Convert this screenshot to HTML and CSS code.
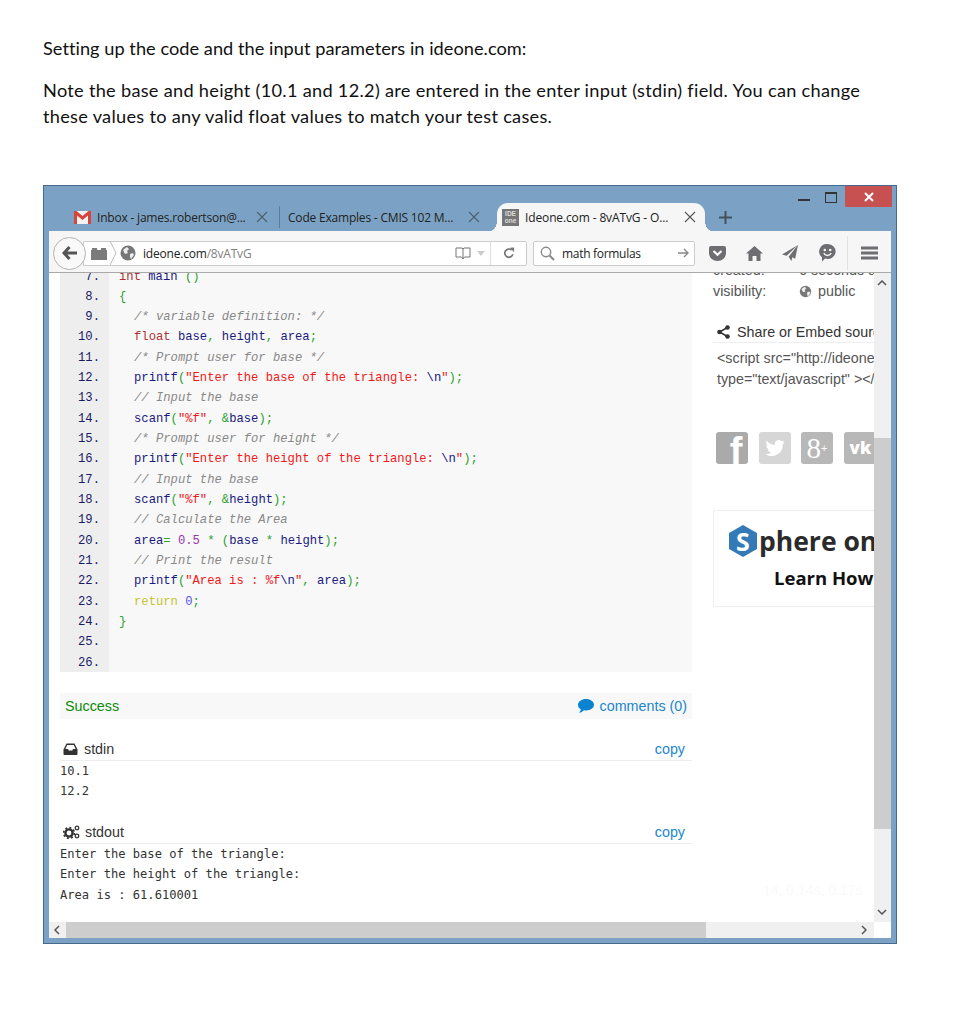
FILE: index.html
```html
<!DOCTYPE html>
<html lang="en">
<head>
<meta charset="utf-8">
<title>Setting up the code</title>
<link rel="stylesheet" href="styles.css">
</head>
<body>
<p class="doc first">Setting up the code and the input parameters in ideone.com:</p>
<p class="doc second">Note the base and height (10.1 and 12.2) are entered in the enter input (stdin) field. You can change<br>these values to any valid float values to match your test cases.</p>

<div class="window">
  <div class="titlebar">
    <div class="tabs">
      <div class="tab tab-one">
        <svg class="fav" viewBox="0 0 17 13"><rect width="17" height="13" fill="#f4f4f4"/><path d="M0 0h2.500l6 5 6-5H17v13h-3V4.500L8.500 9 3 4.500V13H0z" fill="#d6443a"/></svg>
        <span class="tab-title">Inbox - james.robertson@...</span>
        <svg class="tab-x" viewBox="0 0 12 12"><path d="M1 1l10 10M11 1L1 11" stroke="#4c5f70" stroke-width="1.100" fill="none"/></svg>
      </div>
      <div class="tab tab-two">
        <span class="tab-title">Code Examples - CMIS 102 M...</span>
        <svg class="tab-x" viewBox="0 0 12 12"><path d="M1 1l10 10M11 1L1 11" stroke="#4c5f70" stroke-width="1.100" fill="none"/></svg>
      </div>
      <div class="tab tab-active">
        <span class="favbox"><span>IDE</span><span>one</span></span>
        <span class="tab-title">Ideone.com - 8vATvG - O...</span>
        <svg class="tab-x" viewBox="0 0 12 12"><path d="M1 1l10 10M11 1L1 11" stroke="#555" stroke-width="1.100" fill="none"/></svg>
      </div>
      <svg class="plus" viewBox="0 0 13 13"><path d="M6.500 0v13M0 6.500h13" stroke="#45525e" stroke-width="2" fill="none"/></svg>
    </div>
    <div class="controls">
      <span class="ctl-min"></span>
      <span class="ctl-max"></span>
      <span class="ctl-close"><svg viewBox="0 0 10 10"><path d="M1 1l8 8M9 1L1 9" stroke="#fff" stroke-width="2" fill="none"/></svg></span>
    </div>
  </div>

  <div class="toolbar">
    <div class="back"><svg viewBox="0 0 16 14"><path d="M7.500 1L2 7l5.500 6M2.500 7H15" stroke="#555" stroke-width="3" fill="none"/></svg></div>
    <div class="urlbar">
      <svg class="puzzle" viewBox="0 0 16 13"><path d="M0 3h1V1h5v2h4V1h5v2h1v10H0z" fill="#7b7b7b"/></svg>
      <svg class="chev" viewBox="0 0 7 24"><path d="M0 0l6 12-6 12" stroke="#bbb" fill="none"/></svg>
      <svg class="globe" viewBox="0 0 16 16"><circle cx="8" cy="8" r="7.500" fill="#777"/><path d="M3 5l4-3 2 2-2 2 1 2-3 1zM10 9l3-1 1 2-3 4-1-2z" fill="#eee"/></svg>
      <span class="url"><b>ideone.com</b>/8vATvG</span>
      <svg class="book" viewBox="0 0 16 13"><path d="M1 1h6l1 1 1-1h6v9H9.500L8 12l-1.500-2H1zM8 2v9" stroke="#777" fill="#fff"/></svg>
      <svg class="drop" viewBox="0 0 8 5"><path d="M0 0h8L4 5z" fill="#ccc"/></svg>
      <span class="urldiv"></span>
      <svg class="reload" viewBox="0 0 14 14"><path d="M11.500 8.500A4.800 4.800 0 1 1 10 3.500" stroke="#777" stroke-width="2" fill="none"/><path d="M8 1l5-.5V6z" fill="#777"/></svg>
    </div>
    <div class="search">
      <svg class="mag" viewBox="0 0 15 15"><circle cx="6" cy="6" r="4.700" stroke="#888" stroke-width="1.400" fill="none"/><path d="M9.500 9.500L14 14" stroke="#888" stroke-width="2"/></svg>
      <span class="query">math formulas</span>
      <svg class="go" viewBox="0 0 11 10"><path d="M6 1l4 4-4 4M10 5H0" stroke="#888" stroke-width="1.400" fill="none"/></svg>
    </div>
    <div class="tools">
      <svg class="t-pocket" viewBox="0 0 17 15"><path d="M2 0h13a2 2 0 0 1 2 2v5a8.500 8 0 0 1-17 0V2a2 2 0 0 1 2-2z" fill="#6d6d72"/><path d="M4.500 5l4 3.700 4-3.700" stroke="#fff" stroke-width="2.200" fill="none"/></svg>
      <svg class="t-home" viewBox="0 0 17 15"><path d="M8.500 0L0 7.500h2.500V15h4v-5h4v5h4V7.500H17z" fill="#6d6d72"/></svg>
      <svg class="t-plane" viewBox="0 0 17 17"><path d="M17 0L0 10l5 1.500L17 0 7 12.500 10 17l1-4 3 1.500z" fill="#6d6d72"/></svg>
      <svg class="t-smile" viewBox="0 0 17 18"><path d="M8.500 0a8 7.500 0 1 1-2.500 14.600L3 17.500v-4.300A8 7.500 0 0 1 8.500 0z" fill="#6d6d72"/><circle cx="5.800" cy="6" r="1.300" fill="#f6f6f6"/><circle cx="11.200" cy="6" r="1.300" fill="#f6f6f6"/><path d="M4.800 9a4 4 0 0 0 7.400 0" stroke="#f6f6f6" stroke-width="1.300" fill="none"/></svg>
      <span class="t-sep"></span>
      <svg class="t-menu" viewBox="0 0 17 14"><path d="M0 2h17M0 7h17M0 12h17" stroke="#6d6d72" stroke-width="3"/></svg>
    </div>
  </div>

  <div class="page">
    <div class="pane">
      <div class="main">
        <div class="code">
          <ol class="gutter">
            <li>7.</li><li>8.</li><li>9.</li><li>10.</li><li>11.</li><li>12.</li><li>13.</li><li>14.</li><li>15.</li><li>16.</li><li>17.</li><li>18.</li><li>19.</li><li>20.</li><li>21.</li><li>22.</li><li>23.</li><li>24.</li><li>25.</li><li>26.</li>
          </ol>
          <div class="src">
<div class="ln"><span class="ty">int</span> <span class="id">main</span> <span class="pu">()</span></div>
<div class="ln"><span class="pu">{</span></div>
<div class="ln in"><span class="cm">/* variable definition: */</span></div>
<div class="ln in"><span class="ty">float</span> <span class="id">base</span><span class="pu">,</span> <span class="id">height</span><span class="pu">,</span> <span class="id">area</span><span class="pu">;</span></div>
<div class="ln in"><span class="cm">/* Prompt user for base */</span></div>
<div class="ln in"><span class="id">printf</span><span class="pu">(</span><span class="st">"Enter the base of the triangle: </span><span class="es">\n</span><span class="st">"</span><span class="pu">);</span></div>
<div class="ln in"><span class="cm">// Input the base</span></div>
<div class="ln in"><span class="id">scanf</span><span class="pu">(</span><span class="st">"%f"</span><span class="pu">,</span> <span class="pu">&amp;</span><span class="id">base</span><span class="pu">);</span></div>
<div class="ln in"><span class="cm">/* Prompt user for height */</span></div>
<div class="ln in"><span class="id">printf</span><span class="pu">(</span><span class="st">"Enter the height of the triangle: </span><span class="es">\n</span><span class="st">"</span><span class="pu">);</span></div>
<div class="ln in"><span class="cm">// Input the base</span></div>
<div class="ln in"><span class="id">scanf</span><span class="pu">(</span><span class="st">"%f"</span><span class="pu">,</span> <span class="pu">&amp;</span><span class="id">height</span><span class="pu">);</span></div>
<div class="ln in"><span class="cm">// Calculate the Area</span></div>
<div class="ln in"><span class="id">area</span><span class="pu">=</span> <span class="nf">0.5</span> <span class="pu">*</span> <span class="pu">(</span><span class="id">base</span> <span class="pu">*</span> <span class="id">height</span><span class="pu">);</span></div>
<div class="ln in"><span class="cm">// Print the result</span></div>
<div class="ln in"><span class="id">printf</span><span class="pu">(</span><span class="st">"Area is : %f</span><span class="es">\n</span><span class="st">"</span><span class="pu">,</span> <span class="id">area</span><span class="pu">);</span></div>
<div class="ln in"><span class="kw">return</span> <span class="ni">0</span><span class="pu">;</span></div>
<div class="ln"><span class="pu">}</span></div>
<div class="ln">&nbsp;</div>
<div class="ln">&nbsp;</div>
          </div>
        </div>

        <div class="status">
          <span class="success">Success</span>
          <span class="comments"><svg viewBox="0 0 16 14"><path d="M8 0c4.400 0 8 2.500 8 5.700s-3.600 5.700-8 5.700c-.7 0-1.300-.1-2-.2C4.800 12.400 3 13.500 1 13.700c1-1 1.700-2 1.800-3.400C1.100 9.300 0 7.600 0 5.700 0 2.500 3.600 0 8 0z" fill="#0a84d0"/></svg>comments (0)</span>
        </div>

        <div class="head head-in">
          <span class="label"><svg viewBox="0 0 14 12"><path d="M3 .5h8L14 6.500V11a1 1 0 0 1-1 1H1a1 1 0 0 1-1-1V6.500z" fill="#333"/><path d="M3.700 2h6.600l1.800 4H9.500L8.800 7.500H5.200L4.500 6H1.900z" fill="#fff"/></svg>stdin</span>
          <span class="copy">copy</span>
        </div>
        <pre class="out">10.1
12.2</pre>

        <div class="head head-out">
          <span class="label"><svg class="gears" viewBox="0 0 17 14"><circle cx="6" cy="8" r="3.600" stroke="#333" stroke-width="2.400" fill="none" /><circle cx="6" cy="8" r="5.400" stroke="#333" stroke-width="1.600" stroke-dasharray="2 2.200" fill="none"/><circle cx="14" cy="3" r="1.800" stroke="#333" stroke-width="1.300" fill="none"/><circle cx="14" cy="11" r="1.800" stroke="#333" stroke-width="1.300" fill="none"/></svg>stdout</span>
          <span class="copy">copy</span>
        </div>
        <pre class="out">Enter the base of the triangle:
Enter the height of the triangle:
Area is : 61.610001</pre>
      </div>

      <div class="side">
        <div class="meta created"><span class="k">created:</span><span>6 seconds ago</span></div>
        <div class="meta"><span class="k">visibility:</span><span class="vis"><svg viewBox="0 0 16 16"><circle cx="8" cy="8" r="7" fill="#777"/><path d="M3 5l4-3 2 2-2 2 1 2-3 1zM10 9l3-1 1 2-3 4-1-2z" fill="#eee"/></svg>public</span></div>
        <div class="share"><svg viewBox="0 0 13 14"><path d="M10.500 2.500L2.500 7l8 4.500" stroke="#333" stroke-width="1.500" fill="none"/><circle cx="10.500" cy="2.500" r="2.300" fill="#333"/><circle cx="2.500" cy="7" r="2.300" fill="#333"/><circle cx="10.500" cy="11.500" r="2.300" fill="#333"/></svg>Share or Embed source</div>
        <div class="embed">&lt;script src="http://ideone.com/e.js/8vATvG"<br>type="text/javascript" &gt;&lt;/script&gt;</div>
        <div class="social">
          <span class="soc s-fb">f</span>
          <span class="soc s-tw"><svg viewBox="0 0 24 20"><path d="M24 2.400c-.9.400-1.800.7-2.800.8 1-.6 1.800-1.600 2.200-2.700-1 .6-2 1-3.100 1.200A4.900 4.900 0 0 0 11.900 6.200C7.800 6 4.200 4 1.700.9.400 3.200 1 6 3.200 7.500c-.8 0-1.600-.2-2.200-.6 0 2.400 1.700 4.400 3.900 4.900-.7.200-1.500.2-2.200.1.600 2 2.400 3.400 4.600 3.400A9.900 9.900 0 0 1 0 17.800 14 14 0 0 0 21.600 5.400c1-.7 1.800-1.600 2.400-3z" fill="#fff"/></svg></span>
          <span class="soc s-gp">8<sup>+</sup></span>
          <span class="soc s-vk">vk</span>
        </div>
        <div class="sphere">
          <div class="brand"><svg viewBox="0 0 28 32"><path d="M14 0l14 8v16l-14 8-14-8V8z" fill="#337ab7"/></svg><span class="brand-s">S</span><span>phere on</span></div>
          <div class="learn">Learn How</div>
        </div>
        <div class="faint">14, 0.14s, 0.17s</div>
      </div>
    </div>

    <div class="vbar">
      <svg class="arrow up" viewBox="0 0 10 6"><path d="M1 5l4-4 4 4" stroke="#555" stroke-width="1.500" fill="none"/></svg>
      <div class="vthumb"></div>
      <svg class="arrow down" viewBox="0 0 10 6"><path d="M1 1l4 4 4-4" stroke="#555" stroke-width="1.500" fill="none"/></svg>
    </div>
    <div class="hbar">
      <svg class="harrow" viewBox="0 0 6 10"><path d="M5 1L1 5l4 4" stroke="#555" stroke-width="1.500" fill="none"/></svg>
      <div class="hthumb"></div>
      <svg class="harrow right" viewBox="0 0 6 10"><path d="M1 1l4 4-4 4" stroke="#555" stroke-width="1.500" fill="none"/></svg>
    </div>
    <div class="corner"></div>
  </div>
</div>
</body>
</html>
```
FILE: styles.css
```css
* { box-sizing: border-box; }
html, body { margin: 0; padding: 0; background: #fff; }
body { padding: 0 82px 0 43px; height: 1024px; overflow: hidden; }

.doc { margin: 0; font-family: Lato, sans-serif; font-size: 18.2px; line-height: 26px; color: #111; font-variant-ligatures: none; white-space: nowrap; }
.first { padding-top: 35px; letter-spacing: .03px; }
.second { margin-top: 16px; letter-spacing: .28px; }

.window { margin-top: 56px; width: 854px; height: 759px; border: 1px solid #47698a; background: #7ba2c4; padding: 0 5px 5px; display: flex; flex-direction: column; }

.titlebar { height: 45px; display: flex; justify-content: space-between; flex: none; }
.tabs { display: flex; align-items: flex-end; font-family: "Open Sans", sans-serif; font-size: 12px; color: #222; margin-left: 1px; }
.tab { height: 28px; display: flex; align-items: center; position: relative; white-space: nowrap; }
.tab-one { width: 229px; padding-left: 24px; }
.tab-two { width: 211px; padding-left: 8px; border-left: 1px solid #5a7c9b; height: 22px; margin-bottom: 3px; }
.tab-active { width: 208px; margin: 0 7px; padding-left: 5px; background: #f6f6f6; border-radius: 11px 11px 0 0; }
.tab-active::before, .tab-active::after { content: ""; position: absolute; bottom: 0; width: 7px; height: 10px; }
.tab-active::before { left: -7px; background: radial-gradient(ellipse 7px 10px at 0 0, transparent 97%, #f6f6f6 100%); }
.tab-active::after { right: -7px; background: radial-gradient(ellipse 7px 10px at 100% 0, transparent 97%, #f6f6f6 100%); }
.fav { width: 17px; height: 13px; margin-right: 6px; flex: none; }
.tab-title { letter-spacing: -.2px; }
.tab-one .tab-x { margin-left: 10px; }
.tab-two .tab-x { margin-left: 15px; }
.tab-active .tab-x { margin-left: 16px; }
.tab-active .tab-title { letter-spacing: -.13px; }
.tab-x { width: 12px; height: 12px; flex: none; }
.favbox { width: 17px; height: 17px; margin-right: 6px; background: #767676; color: #ddd; font: bold 6.500px/7px "Liberation Sans", sans-serif; display: flex; flex-direction: column; align-items: center; justify-content: center; flex: none; }
.plus { width: 13px; height: 13px; margin: 0 0 7px 7px; flex: none; }

.controls { display: flex; align-items: flex-start; margin-right: -1px; }
.ctl-min { width: 12px; height: 2px; background: #333; margin: 13px 15px 0 0; }
.ctl-max { width: 12px; height: 11px; border: 1px solid #333; border-top-width: 2px; margin: 6px 8px 0 0; }
.ctl-close { width: 47px; height: 21px; background: #c75050; display: flex; align-items: center; justify-content: center; }
.ctl-close svg { width: 10px; height: 10px; }

.toolbar { height: 42px; flex: none; background: #f6f6f6; border-bottom: 1px solid #a9a9a9; display: flex; align-items: center; padding: 3px 0 0 4px; position: relative; }
.back { width: 33px; height: 33px; border-radius: 50%; border: 1px solid #b4b4b4; background: #f9f9f9; display: flex; align-items: center; justify-content: center; flex: none; position: relative; z-index: 1; }
.back svg { width: 16px; height: 14px; }
.urlbar { width: 444px; height: 25px; margin-left: -3px; border: 1px solid #ccc; background: #fff; display: flex; align-items: center; padding-left: 7px; border-radius: 0 2px 2px 0; flex: none; }
.puzzle { width: 16px; height: 13px; flex: none; }
.chev { width: 7px; height: 24px; margin-left: 3px; flex: none; }
.globe { width: 16px; height: 16px; margin-left: 3px; flex: none; }
.url { margin-left: 7px; font: 12px "Open Sans", sans-serif; color: #808080; letter-spacing: -.2px; width: 312px; }
.url b { font-weight: 400; color: #222; }
.book { width: 16px; height: 13px; flex: none; }
.drop { width: 8px; height: 5px; margin-left: 6px; flex: none; }
.urldiv { width: 1px; height: 24px; background: #ddd; margin-left: 5px; flex: none; }
.reload { width: 12px; height: 12px; margin-left: 12px; flex: none; }
.search { width: 162px; height: 25px; margin-left: 6px; border: 1px solid #ccc; border-radius: 2px; background: #fff; display: flex; align-items: center; padding-left: 6px; flex: none; }
.mag { width: 15px; height: 15px; flex: none; }
.query { margin-left: 7px; font: 12px "Open Sans", sans-serif; color: #222; letter-spacing: -.3px; width: 116px; }
.go { width: 11px; height: 10px; flex: none; }
.tools { display: flex; align-items: center; margin-left: 14px; height: 100%; }
.t-pocket { width: 17px; height: 15px; }
.t-home { width: 17px; height: 15px; margin-left: 20px; }
.t-plane { width: 16px; height: 16px; margin-left: 19px; }
.t-smile { width: 17px; height: 18px; margin-left: 21px; }
.t-sep { width: 1px; height: 34px; background: #e2e2e2; margin-left: 11px; }
.t-menu { width: 17px; height: 14px; margin-left: 13px; }

.page { flex: 1; min-height: 0; background: #fff; display: grid; grid-template-columns: 825px 17px; grid-template-rows: 649px 16px; }
.pane { overflow: hidden; display: flex; padding-left: 11px; gap: 21px; }
.main { width: 632px; flex: none; }

.code { display: flex; height: 399px; background: #f8f8f8; font: 12.2px/20.33px "Liberation Mono", monospace; overflow: hidden; }
.gutter { list-style: none; margin: -6.500px 0 0; padding: 0; width: 49px; background: #eee; text-align: right; color: #1a1a66; flex: none; height: 420px; }
.gutter li { padding-right: 9px; }
.src { margin-top: -6.500px; padding-left: 10px; }
.ln { height: 20.33px; white-space: pre; }
.in { padding-left: 15px; }
.cm { color: #888; font-style: italic; }
.ty { color: #a33; }
.id { color: #1a1a80; }
.pu { color: #2ca02c; }
.st { color: #f01818; }
.es { color: #14148c; }
.kw { color: #c4c430; }
.nf { color: #9933aa; }
.ni { color: #5555ee; }

.status { margin-top: 21px; height: 26px; background: #f8f8f8; padding: 0 5px; display: flex; align-items: center; justify-content: space-between; font: 14.3px "Liberation Sans", sans-serif; }
.success { color: #0a8a0a; }
.comments { color: #1a87cf; display: flex; align-items: center; }
.comments svg { width: 16px; height: 14px; margin-right: 6px; }

.head { height: 23px; border-bottom: 1px solid #eee; display: flex; align-items: center; justify-content: space-between; padding: 0 7px 0 3px; font: 14.3px "Liberation Sans", sans-serif; color: #333; }
.head-in { margin-top: 19px; }
.head-out { margin-top: 19px; }
.label { display: flex; align-items: center; }
.label svg { width: 15px; height: 12px; margin-right: 6px; }
.label .gears { width: 17px; height: 14px; margin-right: 5px; }
.copy { color: #1a87cf; }
.out { margin: 0; font: 12.1px/20.4px "DejaVu Sans Mono", monospace; color: #333; }

.side { width: 161px; flex: none; font: 14.3px "Liberation Sans", sans-serif; color: #555; white-space: nowrap; }
.meta { display: flex; height: 20px; align-items: center; }
.created { margin-top: -13px; margin-bottom: 1px; height: 20px; }
.k { width: 86px; flex: none; }
.vis { display: flex; align-items: center; }
.vis svg { width: 13px; height: 13px; margin-right: 6px; }
.share { margin-top: 20px; height: 22px; border-bottom: 1px solid #eee; display: flex; align-items: center; padding-left: 4px; color: #333; overflow: hidden; }
.share svg { width: 13px; height: 14px; margin-right: 7px; flex: none; }
.embed { margin-top: 5px; padding-left: 4px; line-height: 21px; }
.social { display: flex; gap: 10.500px; margin-top: 42px; padding-left: 3px; }
.soc { width: 32px; height: 32px; border-radius: 3px; flex: none; background: #b4b4b4; color: #fff; display: flex; align-items: center; justify-content: center; overflow: hidden; }
.s-fb { background: #aaa; font: bold 38px/32px "Liberation Sans", sans-serif; padding: 6px 0 0 8px; }
.s-tw { background: #d6d6d6; }
.s-tw svg { width: 20px; height: 16px; }
.s-gp { background: #b8b8b8; font: 29px/32px "Liberation Serif", serif; }
.s-gp sup { font: 11px "Liberation Sans", sans-serif; vertical-align: 8px; }
.s-vk { background: #b8b8b8; font: 800 17px/32px "Open Sans", sans-serif; justify-content: flex-start; padding-left: 6px; }

.sphere { margin-top: 46px; width: 180px; height: 97px; border: 1px solid #eee; font-family: "Open Sans", sans-serif; }
.brand { display: flex; align-items: center; margin: 14px 0 0 15px; height: 32px; font-size: 26.500px; line-height: 30px; font-weight: 700; color: #2b2b2b; position: relative; }
.brand svg { width: 28px; height: 32px; flex: none; margin-right: 2px; }
.brand-s { position: absolute; left: 7px; top: 0; color: #fff; font-size: 25px; line-height: 32px; }
.learn { margin: 9px 0 0 60px; font-size: 18.500px; line-height: 24px; font-weight: 700; color: #111; }
.faint { margin: 275px 0 0 50px; font-size: 14px; color: #fafafa; }

.vbar { background: #f0f0f0; padding-top: 165px; position: relative; }
.vthumb { height: 391px; background: #cdcdcd; }
.arrow { width: 10px; height: 6px; position: absolute; left: 3px; }
.up { top: 7px; }
.down { bottom: 7px; }
.hbar { background: #f0f0f0; display: flex; align-items: center; padding-left: 5px; }
.harrow { width: 6px; height: 10px; flex: none; }
.hthumb { width: 640px; height: 16px; margin-left: 6px; background: #cdcdcd; }
.right { margin-left: 155px; }
.corner { background: #fff; }
```
